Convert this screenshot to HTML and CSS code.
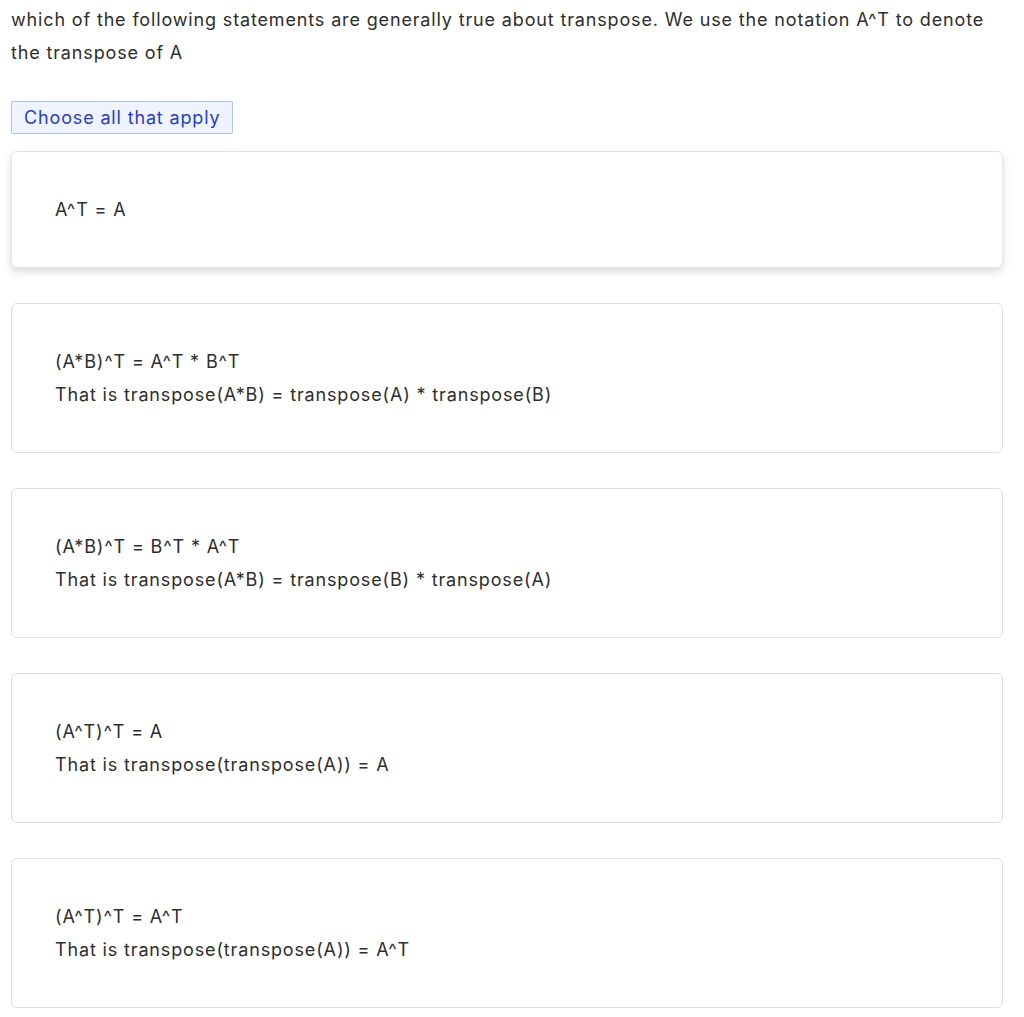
FILE: index.html
```html
<!DOCTYPE html>
<html>
<head>
<meta charset="utf-8">
<link rel="stylesheet" href="styles.css">
</head>
<body>
<div class="page">
  <p class="question">which of the following statements are generally true about transpose. We use the notation A^T to denote the transpose of A</p>
  <div class="hint">Choose all that apply</div>
  <ul class="options">
    <li class="option focused"><p>A^T = A</p></li>
    <li class="option"><p>(A*B)^T = A^T * B^T</p><p>That is transpose(A*B) = transpose(A) * transpose(B)</p></li>
    <li class="option"><p>(A*B)^T = B^T * A^T</p><p>That is transpose(A*B) = transpose(B) * transpose(A)</p></li>
    <li class="option"><p>(A^T)^T = A</p><p>That is transpose(transpose(A)) = A</p></li>
    <li class="option"><p>(A^T)^T = A^T</p><p>That is transpose(transpose(A)) = A^T</p></li>
  </ul>
</div>
</body>
</html>
```

FILE: styles.css
```css
html, body {
  margin: 0;
  padding: 0;
  background: #ffffff;
}
body {
  font-family: Inter, "Noto Sans", "Liberation Sans", sans-serif;
  font-size: 18px;
  letter-spacing: 0.85px;
  color: #2e2e2e;
}
.page {
  width: 992px;
  margin-left: 11px;
  padding-top: 3px;
}
.question {
  margin: 0;
  line-height: 33px;
}
.hint {
  display: inline-block;
  margin-top: 32px;
  height: 31px;
  line-height: 31px;
  padding: 0 12px;
  border: 1px solid #aac3f3;
  background: #eef3fe;
  color: #2a3ec4;
  border-radius: 2px;
}
.options {
  list-style: none;
  margin: 17px 0 0;
  padding: 0;
  display: flex;
  flex-direction: column;
  gap: 35px;
}
.option {
  border: 1px solid #dedede;
  border-radius: 6px;
  padding: 41px 43px;
  background: #fff;
}
.option p {
  margin: 0;
  line-height: 33px;
}
.option.focused {
  border-color: #e6e6e6;
  box-shadow: 0 4px 8px rgba(0, 0, 0, 0.14);
}
```
